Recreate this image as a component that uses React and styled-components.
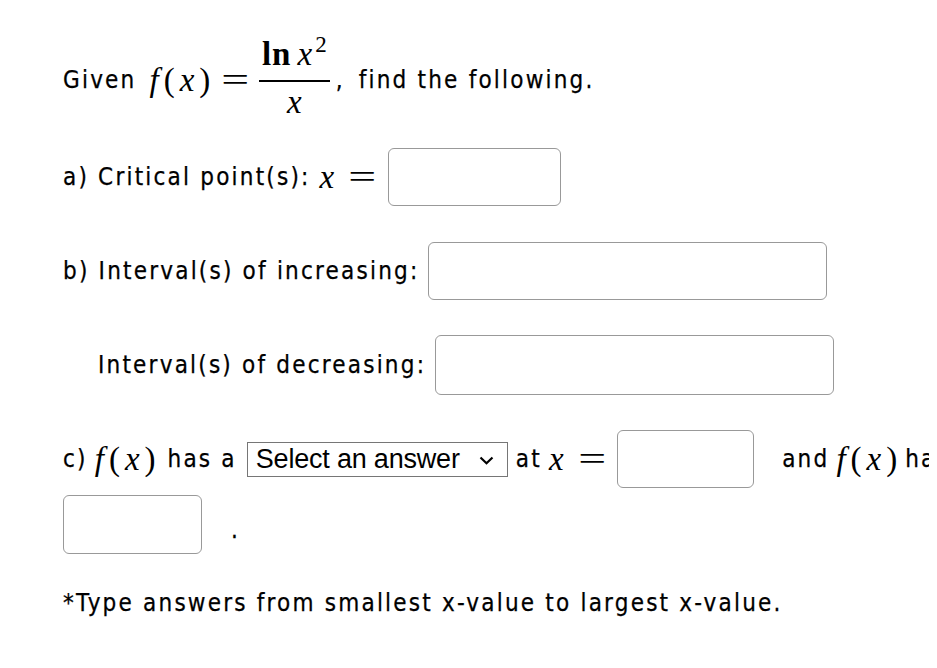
import React from 'react';
import styled, { createGlobalStyle } from 'styled-components';

const GlobalStyle = createGlobalStyle`
  html, body {
    overflow: hidden;
  }
  body {
    margin: 8px;
    background: #fff;
    color: #000;
    font-family: "DejaVu Sans Condensed", Tahoma, sans-serif;
  }
`;

const Page = styled.div`
  padding: 22px 0 0 55px;
  font-size: 24px;
  letter-spacing: 2.2px;
  -webkit-text-stroke: 0.25px #000;
  width: 1100px;
`;

const Row = styled.div`
  display: flex;
  align-items: center;
  white-space: nowrap;
  height: ${(p) => p.h || 60}px;
  margin-top: ${(p) => p.mt || 0}px;
  padding-left: ${(p) => p.indent || 0}px;
`;

const Text = styled.span`
  margin-right: ${(p) => p.mr || 0}px;
  margin-left: ${(p) => p.ml || 0}px;
`;

const Math = styled.span`
  font-family: "Liberation Serif", "Times New Roman", serif;
  font-size: 33px;
  letter-spacing: 0;
  -webkit-text-stroke: 0;
  display: inline-flex;
  align-items: center;
`;

const V = styled.i`
  font-style: italic;
  padding: 0 ${(p) => p.px ?? 3}px;
`;

const Paren = styled.span`
  padding: 0 2px;
`;

const Eq = styled.span`
  display: inline-block;
  transform: scaleX(1.5);
  margin: 0 ${(p) => p.mr ?? 13}px 0 ${(p) => p.ml ?? 16}px;
`;

const Frac = styled.span`
  display: inline-flex;
  flex-direction: column;
  align-items: center;
  margin: 0 6px 0 1px;
  position: relative;
  top: -1px;
`;

const Num = styled.span`
  padding: 0 3px;
  margin-bottom: 3px;
  line-height: 38px;
  display: inline-flex;
  align-items: baseline;
`;

const Ln = styled.span`
  font-weight: bold;
  letter-spacing: 1px;
  margin-right: 5px;
`;

const Sup = styled.span`
  font-size: 23px;
  position: relative;
  top: -13px;
  margin-left: 2px;
`;

const Bar = styled.span`
  align-self: stretch;
  height: 1.6px;
  background: #000;
`;

const Den = styled.span`
  line-height: 36px;
  padding: 2px 0 3px;
`;

const Input = styled.input`
  box-sizing: border-box;
  width: ${(p) => p.w}px;
  height: ${(p) => p.h || 58}px;
  border: 1px solid #999;
  border-radius: 6px;
  background: #fff;
  margin-left: ${(p) => p.ml || 0}px;
  margin-right: ${(p) => p.mr || 0}px;
  font-size: 20px;
  padding: 0 8px;
  outline: none;
`;

const SelectWrap = styled.span`
  position: relative;
  display: inline-flex;
  margin: 0 8px 0 10px;
  -webkit-text-stroke: 0;
`;

const Select = styled.select`
  box-sizing: border-box;
  appearance: none;
  width: 261px;
  height: 35px;
  border: 1px solid #767676;
  border-radius: 0;
  background: #fff;
  color: #000;
  font-family: "Liberation Sans", Arial, sans-serif;
  font-size: 27px;
  letter-spacing: -0.2px;
  padding: 0 0 0 8px;
`;

const Chevron = styled.svg`
  position: absolute;
  right: 14px;
  top: 14px;
  pointer-events: none;
`;

const Period = styled.span`
  margin-left: 29px;
  position: relative;
  top: 6px;
`;

const Fx = () => (
  <Math>
    <V>f</V>
    <Paren>(</Paren>
    <V>x</V>
    <Paren>)</Paren>
  </Math>
);

export default function App() {
  return (
    <>
      <GlobalStyle />
      <Page>
        <Row h={100}>
          <Text mr={10}>Given</Text>
          <Fx />
          <Math>
            <Eq ml={14} mr={13}>=</Eq>
            <Frac>
              <Num>
                <Ln>ln</Ln>
                <V px={1}>x</V>
                <Sup>2</Sup>
              </Num>
              <Bar />
              <Den>
                <V>x</V>
              </Den>
            </Frac>
          </Math>
          <Text mr={14}>,</Text>
          <Text>find the following.</Text>
        </Row>

        <Row mt={17}>
          <Text mr={6}>a) Critical point(s):</Text>
          <Math>
            <V>x</V>
            <Eq>=</Eq>
          </Math>
          <Input w={173} ml={3} />
        </Row>

        <Row mt={34}>
          <Text mr={9}>b) Interval(s) of increasing:</Text>
          <Input w={399} />
        </Row>

        <Row mt={34} indent={35}>
          <Text mr={9}>Interval(s) of decreasing:</Text>
          <Input w={399} h={60} />
        </Row>

        <Row mt={34}>
          <Text mr={4}>c)</Text>
          <Fx />
          <Text ml={10}>has a</Text>
          <SelectWrap>
            <Select defaultValue="">
              <option value="">Select an answer</option>
              <option value="min">local minimum</option>
              <option value="max">local maximum</option>
            </Select>
            <Chevron width="15" height="9" viewBox="0 0 15 9">
              <path d="M1.5 1.5 L7.5 7.2 L13.5 1.5" fill="none" stroke="#000" strokeWidth="2.2" />
            </Chevron>
          </SelectWrap>
          <Text mr={4}>at</Text>
          <Math>
            <V>x</V>
            <Eq>=</Eq>
          </Math>
          <Input w={137} ml={3} mr={28} />
          <Text mr={4}>and</Text>
          <Fx />
          <Text ml={6}>has a</Text>
        </Row>

        <Row mt={5}>
          <Input w={139} h={59} />
          <Period>.</Period>
        </Row>

        <Row mt={19}>
          <Text>*Type answers from smallest x-value to largest x-value.</Text>
        </Row>
      </Page>
    </>
  );
}
